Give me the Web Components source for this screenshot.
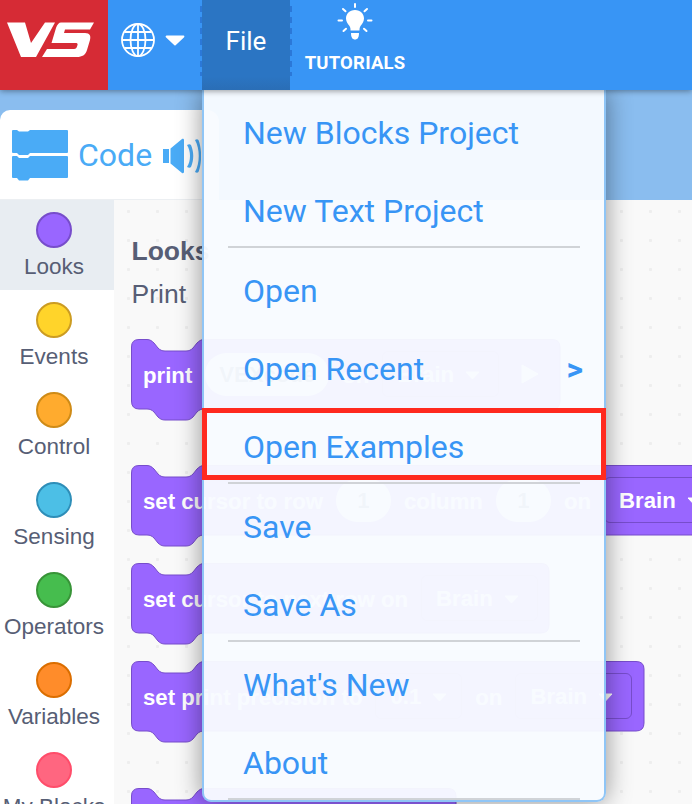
<!DOCTYPE html>
<html>
<head>
<meta charset="utf-8">
<title>VEXcode</title>
<style>
  html, body { margin: 0; padding: 0; overflow: hidden; }
</style>
</head>
<body>
<vex-app>
  <top-bar slot="top"></top-bar>
  <code-tab slot="tab"></code-tab>
  <category-list slot="side">
    <category-item label="Looks" fill="#9966ff" edge="#774dcb" active="true"></category-item>
    <category-item label="Events" fill="#ffd42a" edge="#cc9c22"></category-item>
    <category-item label="Control" fill="#ffab2e" edge="#cf8b17"></category-item>
    <category-item label="Sensing" fill="#4cbfe6" edge="#2e8eb8"></category-item>
    <category-item label="Operators" fill="#46bd4e" edge="#389438"></category-item>
    <category-item label="Variables" fill="#ff8c2a" edge="#db6e00"></category-item>
    <category-item label="My Blocks" fill="#ff6680" edge="#ff4d6a"></category-item>
  </category-list>
  <block-palette slot="work">
    <vex-block width="429" style="margin-bottom:56px">
      <span>print</span>
      <block-input wide="true">VEXcode</block-input>
      <span>on</span>
      <block-menu>Brain</block-menu>
      <block-play></block-play>
    </vex-block>
    <vex-block width="640" style="margin-bottom:28px">
      <span>set cursor to row</span>
      <block-input>1</block-input>
      <span>column</span>
      <block-input>1</block-input>
      <span>on</span>
      <block-menu>Brain</block-menu>
    </vex-block>
    <vex-block width="418" style="margin-bottom:28px">
      <span>set cursor to next row on</span>
      <block-menu>Brain</block-menu>
    </vex-block>
    <vex-block width="513" style="margin-bottom:57px">
      <span>set print precision to</span>
      <block-menu style="padding-right:14px">0.1</block-menu>
      <span>on</span>
      <block-menu>Brain</block-menu>
    </vex-block>
    <vex-block width="325"></vex-block>
  </block-palette>
  <file-menu slot="menu">
    <menu-item>New Blocks Project</menu-item>
    <menu-item>New Text Project</menu-item>
    <menu-line></menu-line>
    <menu-item>Open</menu-item>
    <menu-item more="true">Open Recent</menu-item>
    <menu-item>Open Examples</menu-item>
    <menu-line></menu-line>
    <menu-item>Save</menu-item>
    <menu-item>Save As</menu-item>
    <menu-line></menu-line>
    <menu-item>What's New</menu-item>
    <menu-item>About</menu-item>
    <menu-line></menu-line>
  </file-menu>
  <red-marker slot="menu"></red-marker>
</vex-app>

<script>
window.customElements.define('vex-app', class extends HTMLElement {
  constructor() {
    super()
    this.attachShadow({mode:"open"})
    this.shadowRoot.innerHTML = `
      <style>
        :host {
          display: grid;
          grid-template-columns: 114px 1fr;
          grid-template-rows: 90px 110px 1fr;
          position: relative;
          width: 692px;
          height: 804px;
          overflow: hidden;
          background: #f9f9f9;
          font-family: "Liberation Sans", Arial, sans-serif;
        }
        .top { grid-column: 1 / 3; grid-row: 1; position: relative; z-index: 2; }
        .band { grid-column: 1 / 3; grid-row: 2; background: #8abdef; padding-top: 20px; }
        .side { grid-column: 1; grid-row: 3; background: #fff; overflow: hidden; }
        .work { grid-column: 2; grid-row: 3; overflow: hidden; }
      </style>
      <div class="top"><slot name="top"></slot></div>
      <div class="band"><slot name="tab"></slot></div>
      <div class="side"><slot name="side"></slot></div>
      <div class="work"><slot name="work"></slot></div>
      <slot name="menu"></slot>
    `
  }
})

window.customElements.define('top-bar', class extends HTMLElement {
  constructor() {
    super()
    this.attachShadow({mode:"open"})
    this.shadowRoot.innerHTML = `
      <style>
        :host {
          display: flex;
          height: 90px;
          background: #3895f5;
          box-shadow: 0 1px 6px rgba(0, 0, 0, .4);
          color: #fff;
        }
        .logo { width: 108px; background: #d62b35; }
        .lang { width: 92px; }
        svg { display: block; }
        .tab {
          box-sizing: border-box;
          width: 92px;
          padding: 0 2px;
          background:
            repeating-linear-gradient(#2b78d8 0 6px, transparent 6px 11px) left 6px / 2px 70px no-repeat,
            repeating-linear-gradient(#2b78d8 0 6px, transparent 6px 11px) right 6px / 2px 70px no-repeat;
        }
        .file {
          height: 100%;
          background: linear-gradient(#2b75c3 85%, #2a6eb6);
          display: flex;
          align-items: center;
          justify-content: center;
          padding-bottom: 8px;
          box-sizing: border-box;
          font: 400 26px Roboto, sans-serif;
        }
        .tutorials {
          width: 100px;
          margin-left: 13px;
          display: flex;
          flex-direction: column;
          align-items: center;
          font: 700 18.500px Roboto, sans-serif;
        }
        .tutorials span { margin-top: 11px; line-height: 20px; letter-spacing: .2px; }
      </style>
      <div class="logo">
        <svg width="108" height="90" viewBox="0 0 108 90" fill="#fff">
          <path d="M7 22.500H25L31 43L45 22.500H55L36 57H21Z"/>
          <path d="M61 22.500H94L90 29.500H65L64 33H85C90 33 91 36 90 40L87 50C85.500 55 82 57 77 57H42L47 49H74C76 49 76.500 48 77 46.500L77.500 45C78 43.500 77 43 75.500 43H51.500L56 28C57 24.500 59 22.500 61 22.500Z"/>
        </svg>
      </div>
      <div class="lang">
        <svg width="92" height="90" viewBox="0 0 92 90" fill="none" stroke="#fff" stroke-width="1.800">
          <circle cx="30" cy="40" r="16"/>
          <ellipse cx="30" cy="40" rx="7.500" ry="16"/>
          <path d="M30 24V56M14 40H46M16.500 32H43.500M16.500 48H43.500"/>
          <path d="M58.500 36.500H75.500L67 44.500Z" fill="#fff" stroke-linejoin="round"/>
        </svg>
      </div>
      <div class="tab"><div class="file">File</div></div>
      <div class="tutorials">
        <svg width="36" height="42" viewBox="0 0 36 42" fill="#fff">
          <path d="M18 10C12.500 10 9 14 9 18.500C9 22 11 24 12.500 26C13.500 27.500 13.500 29 13.500 30.500H22.500C22.500 29 22.500 27.500 23.500 26C25 24 27 22 27 18.500C27 14 23.500 10 18 10Z"/>
          <path d="M14 33H22C22 37.500 20.500 39.500 18 39.500C15.500 39.500 14 37.500 14 33Z"/>
          <path d="M18 4V7M6 9L8.500 11.300M30 9L27.500 11.300M1.500 20.500H5M31 20.500H34.500M6.500 31L9 28.700M29.500 31L27 28.700" stroke="#fff" stroke-width="2" stroke-linecap="round"/>
        </svg>
        <span>TUTORIALS</span>
      </div>
    `
  }
})

window.customElements.define('code-tab', class extends HTMLElement {
  constructor() {
    super()
    this.attachShadow({mode:"open"})
    this.shadowRoot.innerHTML = `
      <style>
        :host {
          box-sizing: border-box;
          display: flex;
          align-items: center;
          gap: 11px;
          width: 219px;
          height: 90px;
          padding-left: 12px;
          background: #fff;
          border-radius: 10px 12px 0 0;
          border-bottom: 1px solid #eceff2;
          color: #4aabf6;
          font: 400 32px Roboto, sans-serif;
        }
        svg { display: block; flex: none; }
        span { margin-left: -1px; }
      </style>
      <svg width="56" height="52" viewBox="0 0 56 52" fill="#4aabf6">
        <path d="M1 1H5L7 2.500H16L18 1H55A1 1 0 0 1 56 2V23A1 1 0 0 1 55 24H18L16 26H7L5 24H1A1 1 0 0 1 0 23V2A1 1 0 0 1 1 1Z"/>
        <path d="M1 27H5L7 29H16L18 27H55A1 1 0 0 1 56 28V48A1 1 0 0 1 55 49H18L16 51.500H7L5 49H1A1 1 0 0 1 0 48V28A1 1 0 0 1 1 27Z"/>
      </svg>
      <span>Code</span>
      <svg width="38" height="36" viewBox="0 0 38 36" fill="#4aabf6" style="margin-top:2px">
        <path d="M0 11H6V25H0ZM7.500 10.500L19 1C20 .5 21 1 21 2V34C21 35 20 35.500 19 35L7.500 25.500Z"/>
        <path d="M24 7C28 13 28 23 24 29C26 30 27 30 28 29C31 22 31 14 28 7C27 6 26 6 24 7ZM32 2C37 11 37 25 32 34C33.500 35 34.500 35 35.500 34C39 25 39 11 35.500 2C34.500 1 33.500 1 32 2Z"/>
      </svg>
    `
  }
})

window.customElements.define('category-list', class extends HTMLElement {
  constructor() {
    super()
    this.attachShadow({mode:"open"})
    this.shadowRoot.innerHTML = `
      <style>
        :host { display: flex; flex-direction: column; width: 114px; }
      </style>
      <slot></slot>
    `
  }
})

window.customElements.define('category-item', class extends HTMLElement {
  constructor() {
    super()
    this.attachShadow({mode:"open"})
    this.shadowRoot.innerHTML = `
      <style>
        :host {
          box-sizing: border-box;
          display: flex;
          flex-direction: column;
          align-items: center;
          flex: none;
          height: 90px;
          padding: 12px 6px 0 0;
          color: #575e75;
          font: 400 22.500px "Liberation Sans", Arial, sans-serif;
        }
        :host([active="true"]) { background: #e8edf2; }
        .dot {
          box-sizing: border-box;
          flex: none;
          width: 36px;
          height: 36px;
          border-radius: 50%;
          border: 2px solid;
        }
        .label { margin-top: 6px; line-height: 26px; white-space: nowrap; }
      </style>
      <div class="dot"></div>
      <div class="label"></div>
    `
  }

  connectedCallback() {
    const dot = this.shadowRoot.querySelector(".dot")
    dot.style.background = this.getAttribute('fill')
    dot.style.borderColor = this.getAttribute('edge')
    this.shadowRoot.querySelector(".label").textContent = this.getAttribute('label')
  }
})

window.customElements.define('block-palette', class extends HTMLElement {
  constructor() {
    super()
    this.attachShadow({mode:"open"})
    this.shadowRoot.innerHTML = `
      <style>
        :host {
          display: block;
          height: 100%;
          padding: 36px 0 0 17px;
          color: #575e75;
          font: 400 26.500px "Liberation Sans", Arial, sans-serif;
          background-color: #f9f9f9;
          background-image: radial-gradient(circle, #eeeeee 1.300px, transparent 2px);
          background-size: 29px 29px;
          background-position: 0 -3px;
        }
        .title { font-weight: 700; line-height: 30px; padding-left: .5px; }
        .sub { line-height: 30px; margin: 13px 0 30px; padding-left: .5px; }
      </style>
      <div class="title">Looks</div>
      <div class="sub">Print</div>
      <slot></slot>
    `
  }
})

window.customElements.define('vex-block', class extends HTMLElement {
  constructor() {
    super()
    this.attachShadow({mode:"open"})
    this.shadowRoot.innerHTML = `
      <style>
        :host {
          display: grid;
          height: 70px;
          color: #fff;
          font: 700 22.200px "Liberation Sans", Arial, sans-serif;
        }
        svg { grid-area: 1 / 1; display: block; overflow: visible; }
        .row {
          grid-area: 1 / 1;
          display: flex;
          align-items: center;
          gap: 13px;
          padding-left: 12px;
          height: 70px;
          white-space: nowrap;
        }
        ::slotted(span) { padding-top: 3px; }
      </style>
      <svg height="70"><path fill="#9966ff" stroke="#774dcb"/></svg>
      <div class="row"><slot></slot></div>
    `
  }

  connectedCallback() {
    const w = Number(this.getAttribute('width'))
    const svg = this.shadowRoot.querySelector("svg")
    svg.setAttribute('width', w)
    svg.querySelector("path").setAttribute('d', `M8 .5H16C19 .5 21 2 23 4L27 9C29 11 31 12 34 12H55C58 12 60 11 62 9L66 4C68 2 70 .5 73 .5H${w-8}Q${w} .5 ${w} 8V62Q${w} 70 ${w-8} 70H73C70 70 68 71 66 73L62 78C60 80 58 81 55 81H34C31 81 29 80 27 78L23 73C21 71 19 70 16 70H8Q.5 70 .5 62V8Q.5 .5 8 .5Z`)
    this.style.width = w + "px"
  }
})

window.customElements.define('block-input', class extends HTMLElement {
  constructor() {
    super()
    this.attachShadow({mode:"open"})
    this.shadowRoot.innerHTML = `
      <style>
        :host {
          display: flex;
          align-items: center;
          justify-content: center;
          box-sizing: border-box;
          width: 55px;
          height: 43px;
          padding-top: 2px;
          border-radius: 22px;
          background: #fff;
          color: #575e75;
        }
        :host([wide="true"]) { width: 124px; }
      </style>
      <slot></slot>
    `
  }
})

window.customElements.define('block-menu', class extends HTMLElement {
  constructor() {
    super()
    this.attachShadow({mode:"open"})
    this.shadowRoot.innerHTML = `
      <style>
        :host {
          box-sizing: border-box;
          display: flex;
          align-items: center;
          gap: 11px;
          height: 46px;
          padding: 2px 18px 0 14px;
          border: 1.500px solid #774dcb;
          border-radius: 6px;
          flex: none;
        }
        svg { display: block; }
      </style>
      <slot></slot>
      <svg width="15" height="9" viewBox="0 0 15 9"><path d="M1 1H14L7.500 8Z" fill="#fff" stroke="#fff" stroke-linejoin="round"/></svg>
    `
  }
})

window.customElements.define('block-play', class extends HTMLElement {
  constructor() {
    super()
    this.attachShadow({mode:"open"})
    this.shadowRoot.innerHTML = `
      <style>
        :host { display: block; padding: 0 9px; }
        svg { display: block; }
      </style>
      <svg width="18" height="20" viewBox="0 0 18 20"><path d="M1 1L17 10L1 19Z" fill="#fff" stroke="#fff" stroke-linejoin="round"/></svg>
    `
  }
})

window.customElements.define('file-menu', class extends HTMLElement {
  constructor() {
    super()
    this.attachShadow({mode:"open"})
    this.shadowRoot.innerHTML = `
      <style>
        :host {
          box-sizing: border-box;
          position: absolute;
          z-index: 1;
          left: 202px;
          top: 90px;
          width: 404px;
          display: flex;
          flex-direction: column;
          background: rgba(248, 251, 255, .96);
          border: 2px solid #8fc5f6;
          border-top: 0;
          border-radius: 0 0 9px 9px;
          box-shadow: 0 0 26px rgba(0, 0, 0, .42);
        }
      </style>
      <slot></slot>
    `
  }
})

window.customElements.define('menu-item', class extends HTMLElement {
  constructor() {
    super()
    this.attachShadow({mode:"open"})
    this.shadowRoot.innerHTML = `
      <style>
        :host {
          box-sizing: border-box;
          display: flex;
          align-items: center;
          justify-content: space-between;
          height: 78px;
          padding: 8px 21px 0 39px;
          color: #3895f5;
          font: 400 32px Roboto, sans-serif;
          white-space: nowrap;
        }
        .more { display: none; font-weight: 700; font-size: 32px; line-height: 32px; }
        :host([more="true"]) .more { display: block; }
      </style>
      <slot></slot>
      <span class="more">&gt;</span>
    `
  }
})

window.customElements.define('menu-line', class extends HTMLElement {
  constructor() {
    super()
    this.attachShadow({mode:"open"})
    this.shadowRoot.innerHTML = `
      <style>
        :host {
          display: block;
          flex: none;
          height: 2px;
          margin: 0 24px;
          background: #d0d3d7;
        }
      </style>
    `
  }
})

window.customElements.define('red-marker', class extends HTMLElement {
  constructor() {
    super()
    this.attachShadow({mode:"open"})
    this.shadowRoot.innerHTML = `
      <style>
        :host {
          box-sizing: border-box;
          position: absolute;
          z-index: 3;
          left: 202px;
          top: 408px;
          width: 404px;
          height: 72px;
          border: 5px solid #ff2a1f;
        }
      </style>
    `
  }
})
</script>
</body>
</html>
